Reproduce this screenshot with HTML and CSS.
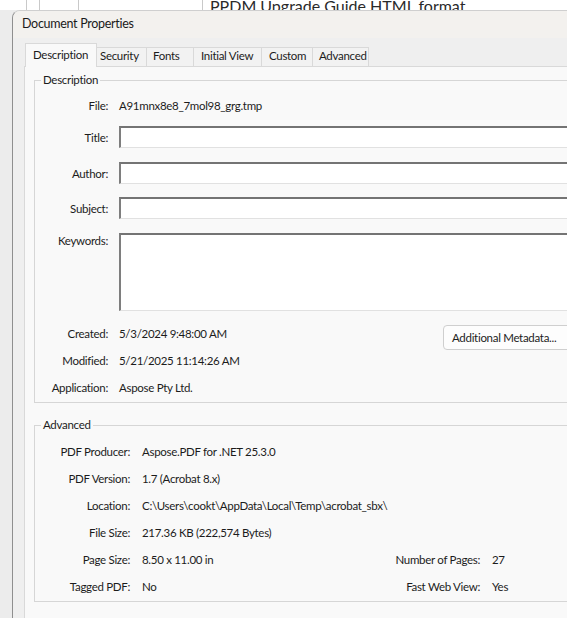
FILE: index.html
```html
<!DOCTYPE html>
<html lang="en">
<head>
<meta charset="utf-8">
<title>Document Properties</title>
<link rel="stylesheet" href="styles.css">
</head>
<body>
<div class="viewer">
  <div class="viewer-cell cell-a"></div>
  <div class="viewer-cell cell-b"></div>
  <div class="viewer-cell cell-c"></div>
  <div class="viewer-cell cell-d"></div>
  <div class="viewer-title">PPDM Upgrade Guide HTML format</div>
</div>
<div class="dialog">
  <div class="titlebar">Document Properties</div>
  <div class="dialog-body">
    <div class="tabs">
      <div class="tab tab-active tab-desc">Description</div>
      <div class="tab tab-sec">Security</div>
      <div class="tab tab-fonts">Fonts</div>
      <div class="tab tab-view">Initial View</div>
      <div class="tab tab-custom">Custom</div>
      <div class="tab tab-adv">Advanced</div>
    </div>
    <div class="tab-page">
      <fieldset class="group group-desc">
        <legend class="group-title">Description</legend>
        <div class="rows">
          <div class="row row-file"><span class="label">File:</span><span class="value">A91mnx8e8_7mol98_grg.tmp</span></div>
          <div class="row row-title"><label class="label" for="f-title">Title:</label><input class="field" id="f-title" type="text"></div>
          <div class="row row-author"><label class="label" for="f-author">Author:</label><input class="field" id="f-author" type="text"></div>
          <div class="row row-subject"><label class="label" for="f-subject">Subject:</label><input class="field" id="f-subject" type="text"></div>
          <div class="row row-keywords"><label class="label label-top" for="f-keywords">Keywords:</label><textarea class="field field-area" id="f-keywords"></textarea></div>
          <div class="meta">
            <div class="meta-rows">
              <div class="row"><span class="label">Created:</span><span class="value">5/3/2024 9:48:00 AM</span></div>
              <div class="row row-tight"><span class="label">Modified:</span><span class="value">5/21/2025 11:14:26 AM</span></div>
              <div class="row row-tight"><span class="label">Application:</span><span class="value">Aspose Pty Ltd.</span></div>
            </div>
            <button class="btn" type="button">Additional Metadata...</button>
          </div>
        </div>
      </fieldset>
      <fieldset class="group group-adv">
        <legend class="group-title">Advanced</legend>
        <div class="adv-grid">
          <span class="label adv-label">PDF Producer:</span><span class="value span-rest">Aspose.PDF for .NET 25.3.0</span>
          <span class="label adv-label">PDF Version:</span><span class="value span-rest">1.7 (Acrobat 8.x)</span>
          <span class="label adv-label">Location:</span><span class="value span-rest">C:\Users\cookt\AppData\Local\Temp\acrobat_sbx\</span>
          <span class="label adv-label">File Size:</span><span class="value span-rest">217.36 KB (222,574 Bytes)</span>
          <span class="label adv-label">Page Size:</span><span class="value">8.50 x 11.00 in</span><span class="label adv-label">Number of Pages:</span><span class="value">27</span>
          <span class="label adv-label">Tagged PDF:</span><span class="value">No</span><span class="label adv-label">Fast Web View:</span><span class="value">Yes</span>
        </div>
      </fieldset>
    </div>
  </div>
</div>
</body>
</html>
```
FILE: styles.css
```css
* { box-sizing: border-box; }

html, body {
  margin: 0;
  width: 567px;
  height: 618px;
  overflow: hidden;
}

body {
  background: #ececec;
  font-family: Lato, "Noto Sans", sans-serif;
  font-size: 11.5px;
  letter-spacing: -0.3px;
  color: #1c1c1c;
}

/* background document viewer strip */
.viewer {
  display: flex;
  height: 10px;
  overflow: hidden;
  background: #ffffff;
}
.viewer-cell {
  flex: none;
  height: 10px;
  border-right: 1px solid #c9c9c9;
}
.cell-a { width: 27px; }
.cell-b { width: 13px; }
.cell-c { width: 39px; }
.cell-d { width: 124px; }
.viewer-title {
  padding-left: 7px;
  margin-top: -2px;
  font-size: 16px;
  line-height: 16px;
  letter-spacing: 0;
  color: #2a2a2a;
  white-space: nowrap;
}

/* dialog */
.dialog {
  margin-left: 12px;
  width: 640px;
  border-top: 1px solid #cfcfcf;
  border-left: 1px solid #8f8f8f;
  border-top-left-radius: 8px;
  overflow: hidden;
  background: #efefef;
}
.titlebar {
  height: 27px;
  padding: 0 0 3px 9px;
  display: flex;
  align-items: center;
  background: #f3f1ee;
  font-size: 12.5px;
  color: #1a1a1a;
}
.dialog-body {
  padding-left: 11px;
  background: #efefef;
}

/* tabs */
.tabs {
  position: relative;
  z-index: 1;
  display: flex;
  align-items: flex-end;
  height: 28px;
  padding-left: 1px;
}
.tab {
  flex: none;
  height: 19px;
  line-height: 16px;
  padding-left: 6px;
  border: 1px solid #d9d9d9;
  border-bottom: none;
  margin-left: -1px;
  background: #f2f2f2;
  color: #1c1c1c;
  white-space: nowrap;
}
.tab-active {
  height: 24px;
  margin-bottom: -1px;
  padding-top: 3px;
  padding-left: 7px;
  background: #f9f9f9;
  margin-left: 0;
}
.tab-desc { width: 72px; }
.tab-sec { width: 51px; padding-left: 3px; }
.tab-fonts { width: 48px; }
.tab-view { width: 69px; padding-left: 7px; }
.tab-custom { width: 52px; padding-left: 7px; }
.tab-adv { width: 57px; }

/* tab page */
.tab-page {
  min-height: 600px;
  border-top: 1px solid #d9d9d9;
  border-left: 1px solid #d9d9d9;
  background: #f9f9f9;
  padding: 5px 30px 0 9px;
}

.group {
  margin: 0;
  padding: 0;
  min-width: 0;
  border: 1px solid #d6d6d6;
}
.group-title {
  margin-left: 6px;
  padding: 0 2px;
  line-height: 16px;
  height: 16px;
  color: #1c1c1c;
}
.group-desc { padding-bottom: 4px; }
.group-adv {
  margin-top: 14px;
  padding: 7px 0 4px;
}

.rows { display: flex; flex-direction: column; }
.row {
  display: flex;
  align-items: center;
  height: 22px;
}
.row-file { margin-top: 6px; }
.row-title { margin-top: 10px; }
.row-author { margin-top: 14px; }
.row-subject { margin-top: 13px; }
.row-keywords {
  margin-top: 14px;
  height: 78px;
  align-items: flex-start;
}
.row-tight { margin-top: 5px; }

.label {
  flex: none;
  width: 73px;
  margin-right: 11px;
  text-align: right;
  white-space: nowrap;
}
.label-top { line-height: 16px; margin-top: 0; }
.value { white-space: nowrap; }

.field {
  flex: 1;
  min-width: 0;
  height: 22px;
  margin: 0;
  padding: 0 4px;
  background: #ffffff;
  border-top: 2px solid #747474;
  border-left: 2px solid #7e7e7e;
  border-bottom: 1px solid #e1e1e1;
  border-right: 1px solid #e1e1e1;
  border-radius: 0;
  font: inherit;
  outline: none;
}
.field-area {
  height: 78px;
  resize: none;
}

.meta {
  display: flex;
  align-items: flex-start;
  margin-top: 11px;
}
.meta-rows {
  flex: none;
  width: 408px;
  display: flex;
  flex-direction: column;
}
.btn {
  flex: none;
  width: 130px;
  height: 25px;
  margin-top: 3px;
  padding: 0 0 0 8px;
  text-align: left;
  background: #fdfdfd;
  border: 1px solid #cfcfcf;
  border-radius: 4px;
  font: inherit;
  letter-spacing: inherit;
  color: #1c1c1c;
}

.adv-grid {
  display: grid;
  grid-template-columns: 95px 226px 100px 1fr;
  grid-auto-rows: 22px;
  column-gap: 12px;
  row-gap: 5px;
  align-items: center;
}
.adv-label { width: auto; margin-right: 0; }
.span-rest { grid-column: 2 / 5; }
```
